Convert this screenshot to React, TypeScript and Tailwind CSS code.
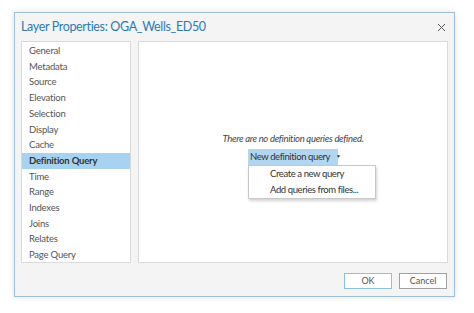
import React from "react";

const items = [
  "General",
  "Metadata",
  "Source",
  "Elevation",
  "Selection",
  "Display",
  "Cache",
  "Definition Query",
  "Time",
  "Range",
  "Indexes",
  "Joins",
  "Relates",
  "Page Query",
];

export default function App() {
  return (
    <div
      className="w-[474px] h-[313px] bg-white pl-[14px] pt-[12px]"
      style={{ fontFamily: 'Lato, "Open Sans", sans-serif' }}
    >
      <div className="w-[441px] h-[285px] bg-[#f4f4f4] border border-[#9dc0d8] shadow-[0_0_6px_rgba(0,0,0,0.12)] flex flex-col">
        <div className="h-[28px] flex items-center justify-between pl-[6px] pr-[8px]">
          <span className="text-[12.5px] text-[#2d7ab3] leading-none whitespace-nowrap tracking-[-0.35px]">
            Layer Properties: OGA_Wells_ED50
          </span>
          <svg width="9" height="9" viewBox="0 0 9 9" className="mt-[1px]">
            <path d="M1 1L8 8M8 1L1 8" stroke="#555" strokeWidth="1" />
          </svg>
        </div>
        <div className="flex px-[6px] gap-[7px] h-[222px]">
          <div className="w-[110px] h-full bg-white border border-[#dadada] pt-[1px]">
            {items.map((it) => (
              <div
                key={it}
                className={
                  "h-[15.7px] flex items-center pl-[7px] text-[9.5px] leading-none whitespace-nowrap tracking-[-0.2px] " +
                  (it === "Definition Query"
                    ? "bg-[#a7d3f1] font-bold text-[#333]"
                    : "text-[#555]")
                }
              >
                {it}
              </div>
            ))}
          </div>
          <div className="flex-1 h-full bg-white border border-[#dadada] flex flex-col items-center pt-[92px]">
            <div className="text-[9.5px] italic text-[#444] leading-none whitespace-nowrap tracking-[-0.3px]">
              There are no definition queries defined.
            </div>
            <div className="relative mt-[5px]">
              <div className="h-[16px] w-[90px] bg-[#b3d6f0] flex items-center pl-[2px] text-[9.5px] text-[#333] leading-none whitespace-nowrap tracking-[-0.4px]">
                New definition query
                <span className="ml-[6px] text-[5px]">▼</span>
              </div>
              <div className="absolute left-0 top-[16px] w-[128px] h-[34px] bg-white border border-[#c8c8c8] shadow-[1px_2px_3px_rgba(0,0,0,0.18)] flex flex-col justify-center pl-[21px] gap-[4px]">
                <div className="text-[9.5px] text-[#333] leading-[12px] whitespace-nowrap tracking-[-0.4px]">Create a new query</div>
                <div className="text-[9.5px] text-[#333] leading-[12px] whitespace-nowrap tracking-[-0.4px]">Add queries from files...</div>
              </div>
            </div>
          </div>
        </div>
        <div className="flex-1 flex items-center justify-end pr-[7px] gap-[7px] pt-[2px]">
          <div className="w-[48px] h-[16px] bg-white border border-[#8ec0e4] flex items-center justify-center text-[9px] text-[#555]">
            OK
          </div>
          <div className="w-[48px] h-[16px] bg-white border border-[#a0a0a0] flex items-center justify-center text-[9px] text-[#555]">
            Cancel
          </div>
        </div>
      </div>
    </div>
  );
}
